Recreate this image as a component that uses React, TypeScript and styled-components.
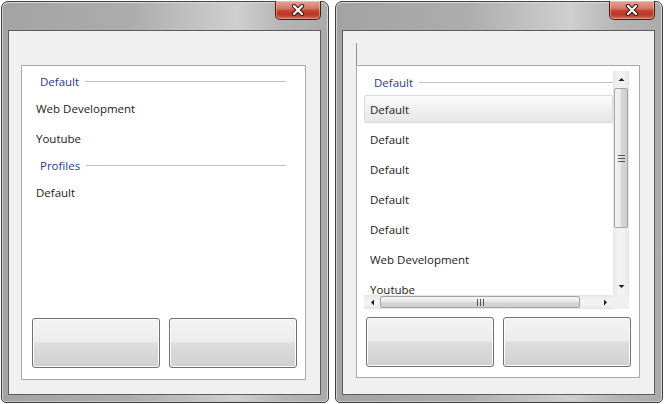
import React from 'react';
import styled, { createGlobalStyle, css } from 'styled-components';

const GlobalStyle = createGlobalStyle`
  html, body {
    margin: 0;
    padding: 0;
    background: #ffffff;
  }
  body {
    font-family: "Open Sans", "Noto Sans", sans-serif;
    font-size: 11.5px;
    color: #1b1b1b;
  }
`;

const Desktop = styled.div`
  display: flex;
  gap: 6px;
  padding: 1px 0 0 1px;
  height: 403px;
  box-sizing: border-box;
`;

const Window = styled.div`
  width: 328px;
  height: 402px;
  box-sizing: border-box;
  display: flex;
  flex-direction: column;
  border: 1px solid #3e3e3e;
  border-radius: 7px 7px 5px 5px;
  padding: 0 7px 7px 6px;
  background: linear-gradient(90deg, #a3a3a3 0%, #adadad 40%, #cfcfcf 72%, #b5b5b5 86%, #ababab 100%);
  box-shadow: inset 0 1px 0 #dcdcdc, inset 1px 0 0 #d0d0d0, inset -1px 0 0 #d8d8d8, inset 0 -1px 0 #c8c8c8;
`;

const TitleBar = styled.div`
  height: 28px;
  flex: none;
  display: flex;
  justify-content: flex-end;
  align-items: flex-start;
`;

const CloseButton = styled.div`
  width: 46px;
  height: 19px;
  margin-top: -1px;
  box-sizing: border-box;
  border: 1px solid #4b1a12;
  border-top: none;
  border-radius: 0 0 5px 5px;
  background: linear-gradient(180deg, #e4a497 0%, #d47a6a 40%, #c2402e 55%, #b8382a 75%, #d06a55 100%);
  box-shadow: inset 0 0 0 1px rgba(255, 210, 200, 0.45);
  display: flex;
  align-items: center;
  justify-content: center;
`;

const Client = styled.div<{ $pad: string }>`
  flex: 1;
  min-height: 0;
  display: flex;
  flex-direction: column;
  border: 1px solid #5c5c5c;
  background: #f0f0f0;
  padding: ${(p) => p.$pad};
`;

const Stub = styled.div`
  height: 22px;
  flex: none;
  border-left: 1px solid #8f8f8f;
`;

const Panel = styled.div<{ $top?: number }>`
  flex: 1;
  min-height: 0;
  display: flex;
  flex-direction: column;
  background: #ffffff;
  border: 1px solid #a9a9a9;
  padding: ${(p) => p.$top ?? 5}px 8px 0 8px;
`;

const List = styled.div`
  flex: 1;
  min-height: 0;
  display: flex;
  flex-direction: column;
  gap: 2px;
`;

const GroupHeader = styled.div<{ $endGap?: number }>`
  height: 22px;
  flex: none;
  display: flex;
  align-items: center;
  gap: 6px;
  padding: 0 ${(p) => p.$endGap ?? 0}px 0 10px;
  color: #1e3c8c;
  &::after {
    content: '';
    flex: 1;
    height: 1px;
    background: #bac2ce;
  }
`;

const Item = styled.div<{ $selected?: boolean }>`
  height: 28px;
  flex: none;
  box-sizing: border-box;
  display: flex;
  align-items: center;
  padding-left: 5px;
  white-space: nowrap;
  border: 1px solid transparent;
  border-radius: 2px;
  ${(p) =>
    p.$selected &&
    css`
      border-color: #dadada;
      background: linear-gradient(180deg, #fbfbfb 0%, #f1f1f1 50%, #e6e6e6 100%);
    `}
`;

const ButtonRow = styled.div<{ $left: number; $bottom: number }>`
  flex: none;
  display: flex;
  gap: 9px;
  padding: 0 0 ${(p) => p.$bottom}px ${(p) => p.$left}px;
`;

const PushButton = styled.div`
  width: 128px;
  height: 50px;
  flex: none;
  box-sizing: border-box;
  border: 1px solid #707070;
  border-radius: 3px;
  background: linear-gradient(180deg, #f3f3f3 0%, #ececec 48%, #dddddd 50%, #d0d0d0 100%);
  box-shadow: inset 0 0 0 1px #fcfcfc;
`;

const ListView = styled.div`
  height: 238px;
  flex: none;
  margin: 0 2px 8px -1px;
  display: grid;
  grid-template-columns: 1fr 16px;
  grid-template-rows: 1fr 14px;
`;

const ViewContent = styled.div`
  overflow: hidden;
  display: flex;
  flex-direction: column;
  gap: 2px;
`;

const VScroll = styled.div`
  display: flex;
  flex-direction: column;
  background: linear-gradient(90deg, #e6e6e6 0%, #f2f2f2 30%, #f2f2f2 70%, #e6e6e6 100%);
`;

const HScroll = styled.div`
  display: flex;
  background: linear-gradient(180deg, #e6e6e6 0%, #f2f2f2 30%, #f2f2f2 70%, #e6e6e6 100%);
`;

const Corner = styled.div`
  background: #f0f0f0;
`;

const ArrowCell = styled.div<{ $h?: boolean }>`
  flex: none;
  width: ${(p) => (p.$h ? '16px' : '100%')};
  height: ${(p) => (p.$h ? '100%' : '17px')};
  display: flex;
  align-items: center;
  justify-content: center;
`;

const Track = styled.div`
  flex: 1;
`;

const VThumb = styled.div`
  height: 140px;
  flex: none;
  box-sizing: border-box;
  margin: 0 1px;
  border: 1px solid #a3a3a3;
  border-radius: 2px;
  background: linear-gradient(90deg, #f4f4f4 0%, #e9e9e9 45%, #d6d6d6 55%, #cfcfcf 100%);
  display: flex;
  align-items: center;
  justify-content: center;
`;

const HThumb = styled.div`
  width: 200px;
  flex: none;
  box-sizing: border-box;
  margin: 1px 0;
  border: 1px solid #a3a3a3;
  border-radius: 2px;
  background: linear-gradient(180deg, #f4f4f4 0%, #e9e9e9 45%, #d6d6d6 55%, #cfcfcf 100%);
  display: flex;
  align-items: center;
  justify-content: center;
`;

const Arrow = ({ dir }: { dir: 'up' | 'down' | 'left' | 'right' }) => {
  const pts = {
    up: '0.5,4 3.5,1 6.5,4',
    down: '0.5,1 3.5,4 6.5,1',
    left: '4,0.5 1,3.5 4,6.5',
    right: '1,0.5 4,3.5 1,6.5',
  }[dir];
  const h = dir === 'left' || dir === 'right';
  return (
    <svg width={h ? 5 : 7} height={h ? 7 : 5} viewBox={h ? '0 0 5 7' : '0 0 7 5'}>
      <polygon points={pts} fill="#202020" />
    </svg>
  );
};

const Grip = ({ horizontal }: { horizontal?: boolean }) =>
  horizontal ? (
    <svg width="7" height="7" viewBox="0 0 7 7">
      {[0, 3, 6].map((x) => (
        <rect key={x} x={x} y="0" width="1" height="7" fill="#555" />
      ))}
    </svg>
  ) : (
    <svg width="7" height="7" viewBox="0 0 7 7">
      {[0, 3, 6].map((y) => (
        <rect key={y} x="0" y={y} width="7" height="1" fill="#555" />
      ))}
    </svg>
  );

const CloseGlyph = () => (
  <svg width="14" height="12" viewBox="0 0 14 12">
    <path d="M3 2 L11 10 M11 2 L3 10" stroke="#3a1410" strokeWidth="4.2" strokeLinecap="round" />
    <path d="M3 2 L11 10 M11 2 L3 10" stroke="#ffffff" strokeWidth="2.2" strokeLinecap="round" />
  </svg>
);

const Frame = ({ children, pad }: { children: React.ReactNode; pad: string }) => (
  <Window>
    <TitleBar>
      <CloseButton>
        <CloseGlyph />
      </CloseButton>
    </TitleBar>
    <Client $pad={pad}>{children}</Client>
  </Window>
);

const rightItems = ['Default', 'Default', 'Default', 'Default', 'Default', 'Web Development', 'Youtube'];

export default function App() {
  return (
    <>
      <GlobalStyle />
      <Desktop>
        <Frame pad="34px 14px 14px 12px">
          <Panel $top={4}>
            <List>
              <GroupHeader $endGap={11}>Default</GroupHeader>
              <Item>Web Development</Item>
              <Item>Youtube</Item>
              <GroupHeader $endGap={11}>Profiles</GroupHeader>
              <Item>Default</Item>
            </List>
            <ButtonRow $left={2} $bottom={11}>
              <PushButton />
              <PushButton />
            </ButtonRow>
          </Panel>
        </Frame>

        <Frame pad="12px 14px 16px 13px">
          <Stub />
          <Panel $top={5}>
            <ListView>
              <ViewContent>
                <GroupHeader>Default</GroupHeader>
                {rightItems.map((label, i) => (
                  <Item key={i} $selected={i === 0}>
                    {label}
                  </Item>
                ))}
              </ViewContent>
              <VScroll>
                <ArrowCell>
                  <Arrow dir="up" />
                </ArrowCell>
                <VThumb>
                  <Grip />
                </VThumb>
                <Track />
                <ArrowCell>
                  <Arrow dir="down" />
                </ArrowCell>
              </VScroll>
              <HScroll>
                <ArrowCell $h>
                  <Arrow dir="left" />
                </ArrowCell>
                <HThumb>
                  <Grip horizontal />
                </HThumb>
                <Track />
                <ArrowCell $h>
                  <Arrow dir="right" />
                </ArrowCell>
              </HScroll>
              <Corner />
            </ListView>
            <ButtonRow $left={1} $bottom={9}>
              <PushButton />
              <PushButton />
            </ButtonRow>
          </Panel>
        </Frame>
      </Desktop>
    </>
  );
}
